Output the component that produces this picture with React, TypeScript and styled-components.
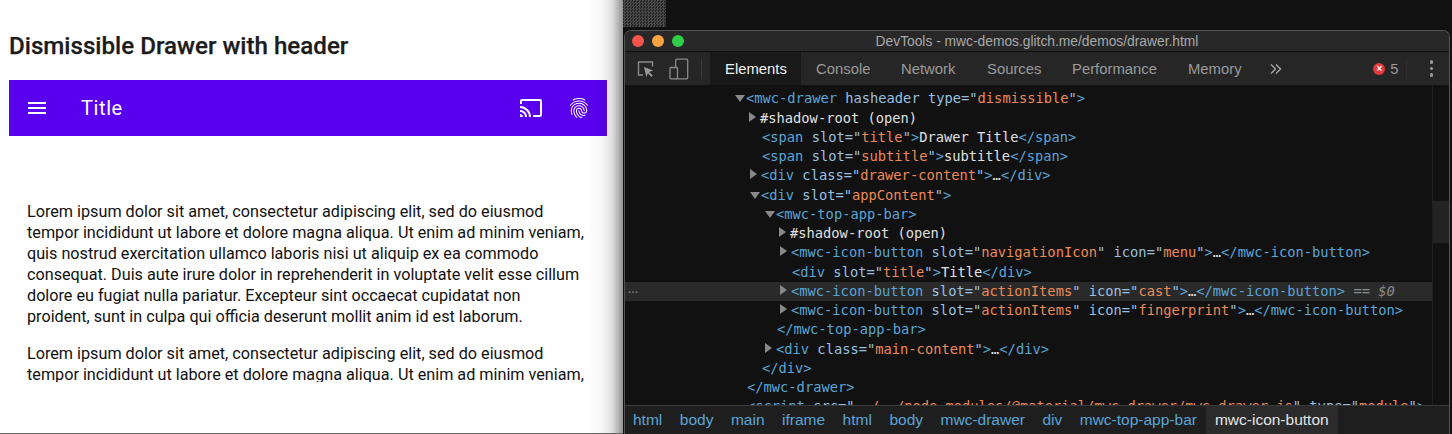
import React from 'react'
import styled, {createGlobalStyle} from 'styled-components'
import {MdCast, MdFingerprint, MdMenu} from 'react-icons/md'

const GlobalStyle = createGlobalStyle`
  html, body {
    margin: 0;
    padding: 0;
    width: 1452px;
    height: 434px;
    overflow: hidden;
    background: #111;
  }
`

const Page = styled.div`
  display: flex;
  width: 1452px;
  height: 434px;
  overflow: hidden;
`

// left side: the demo page
const DemoPane = styled.div`
  position: relative;
  flex: 0 0 623px;
  height: 434px;
  box-sizing: border-box;
  background: #fff;
  border-bottom: 1px solid #666;
  padding: 31px 16px 0 9px;
  font-family: Roboto, sans-serif;
  overflow: hidden;

  &::after {
    content: '';
    position: absolute;
    top: 0;
    right: 0;
    bottom: 0;
    width: 36px;
    background: linear-gradient(90deg, rgba(0, 0, 0, 0), rgba(0, 0, 0, 0.03) 40%, rgba(0, 0, 0, 0.13) 70%, rgba(0, 0, 0, 0.42));
  }
`

const DemoTitle = styled.h1`
  margin: 0;
  font-size: 24.15px;
  line-height: 30px;
  font-weight: 500;
  color: #1c1c1c;
  -webkit-text-stroke: 0.25px #1c1c1c;
`

const AppBar = styled.div`
  display: flex;
  align-items: center;
  height: 56px;
  margin-top: 19px;
  padding: 0 16px;
  background: #5900ee;
  color: #fff;
`

const BarTitle = styled.div`
  flex: 1;
  margin-left: 32px;
  font-size: 20px;
  font-weight: 400;
  letter-spacing: 0.6px;
`

const BarIcon = styled.span<{$gap?: number}>`
  display: flex;
  margin-left: ${(p) => p.$gap || 0}px;
  font-size: 24px;
`

const Article = styled.div`
  height: 181px;
  margin-top: 65px;
  padding: 0 21px 0 18px;
  overflow: hidden;
  font-size: 16.2px;
  line-height: 21px;
  color: #111;
`

const Para = styled.p`
  margin: 0 0 16px;
`

// right side: devtools
const DarkSide = styled.div`
  flex: 1;
  display: flex;
  flex-direction: column;
  min-width: 0;
  height: 434px;
  padding-right: 2px;
  background: #111;
`

const TopStrip = styled.div`
  flex: 0 0 30px;
`

const Noise = styled.div`
  width: 43px;
  height: 27px;
  background: repeating-conic-gradient(#4a4a4a 0 25%, #262626 0 50%) 0 0 / 3px 3px;
`

const Win = styled.div`
  flex: 1;
  display: flex;
  flex-direction: column;
  min-height: 0;
  margin-left: 1px;
  border: 1px solid #555;
  border-bottom: 0;
  border-radius: 7px 7px 0 0;
  background: #111;
  overflow: hidden;
  font-family: 'Liberation Sans', sans-serif;
`

const TitleBar = styled.div`
  position: relative;
  flex: 0 0 20px;
  display: flex;
  align-items: center;
  justify-content: center;
  background: #282828;
  border-bottom: 1px solid #111;
  font-size: 13.8px;
  color: #a8a8a8;
`

const Lights = styled.div`
  position: absolute;
  left: 7px;
  top: 4px;
  display: flex;
  gap: 8px;
`

const Light = styled.span<{$color: string}>`
  width: 12px;
  height: 12px;
  border-radius: 50%;
  background: ${(p) => p.$color};
`

const Toolbar = styled.div`
  flex: 0 0 33px;
  display: flex;
  align-items: center;
  background: #262626;
  color: #9a9a9a;
`

const ToolIcons = styled.div`
  display: flex;
  align-items: center;
  gap: 13px;
  width: 76px;
  padding-left: 11px;
  box-sizing: border-box;
`

const ToolDivider = styled.span`
  width: 1px;
  height: 20px;
  margin: 0 8px 0 0;
  background: #3a3a3a;
`

const Tab = styled.div<{$active?: boolean; $width: number}>`
  display: flex;
  align-items: center;
  height: 33px;
  width: ${(p) => p.$width}px;
  padding-left: 15px;
  box-sizing: border-box;
  font-size: 14.85px;
  background: ${(p) => (p.$active ? '#191919' : 'transparent')};
  color: ${(p) => (p.$active ? '#f0f0f0' : '#9a9a9a')};
`

const Chevrons = styled.div`
  display: flex;
  margin-left: -1px;
`

const Spacer = styled.div`
  flex: 1;
`

const ErrorDot = styled.span`
  display: flex;
  align-items: center;
  justify-content: center;
  width: 12px;
  height: 12px;
  border-radius: 50%;
  background: #e5383b;
  color: #fff;
  font-size: 10px;
  line-height: 12px;
  font-weight: 700;
`

const ErrorCount = styled.span`
  margin: 0 7px 0 5px;
  font-size: 14.7px;
  color: #9a9a9a;
`

const ToolDividerSmall = styled.span`
  width: 1px;
  height: 20px;
  margin-right: 23px;
  background: #2f2f2f;
`

const Kebab = styled.div`
  display: flex;
  flex-direction: column;
  gap: 3px;
  margin-right: 16px;

  span {
    width: 3.5px;
    height: 3.5px;
    border-radius: 50%;
    background: #999;
  }
`

const Body = styled.div`
  flex: 1;
  display: flex;
  min-height: 0;
`

const Tree = styled.div`
  flex: 1;
  min-width: 0;
  padding-top: 4.4px;
  overflow: hidden;
  font-family: 'DejaVu Sans Mono', monospace;
  font-size: 13.74px;
  line-height: 19.25px;
  color: #e0e0e0;
`

const Row = styled.div<{$indent: number; $selected?: boolean}>`
  position: relative;
  height: 19.25px;
  padding-left: ${(p) => p.$indent}px;
  white-space: pre;
  background: ${(p) => (p.$selected ? '#2a2a2a' : 'transparent')};
`

const Dots = styled.span`
  position: absolute;
  left: 3px;
  top: -2px;
  font-family: 'Liberation Sans', sans-serif;
  font-size: 11px;
  font-weight: 700;
  letter-spacing: 0.5px;
  color: #777;
`

const Arrow = styled.span<{$open?: boolean}>`
  display: inline-block;
  width: 0;
  height: 0;
  margin-left: -11px;
  margin-right: ${(p) => (p.$open ? 1 : 4)}px;
  vertical-align: 1px;
  ${(p) =>
    p.$open
      ? `border-left: 5px solid transparent; border-right: 5px solid transparent; border-top: 7px solid #888;`
      : `border-top: 5px solid transparent; border-bottom: 5px solid transparent; border-left: 7px solid #888;`}
`

const TagText = styled.span`
  color: #5aa5d6;
`

const AttrName = styled.span`
  color: #9ac0e0;
`

const AttrValue = styled.span`
  color: #ec8a58;
`

const Muted = styled.span`
  color: #8a8a8a;
`

const MutedItalic = styled.span`
  color: #8a8a8a;
  font-style: italic;
`

const Scrollbar = styled.div`
  flex: 0 0 16px;
  border-left: 1px solid #1f1f1f;
  padding-top: 116px;
`

const ScrollThumb = styled.div`
  height: 42px;
  background: #232323;
`

const Crumbs = styled.div`
  flex: 0 0 28px;
  display: flex;
  align-items: stretch;
  padding-left: 8px;
  background: #1e1e1e;
  border-top: 1px solid #3a3a3a;
  font-size: 15.5px;
`

const Crumb = styled.div`
  display: flex;
  align-items: center;
  margin-right: 17.5px;
  color: #5aa5d6;
`

const ActiveCrumb = styled.div`
  display: flex;
  align-items: center;
  margin-left: -8.5px;
  padding: 0 9px;
  background: #2b2b2b;
  color: #e4e4e4;
`

const Attr = ({n, v}: {n: string; v: string}) => (
  <>
    <AttrName> {n}="</AttrName>
    <AttrValue>{v}</AttrValue>
    <AttrName>"</AttrName>
  </>
)

const IconButtonRow = ({slot, icon, indent, selected}: {slot: string; icon: string; indent: number; selected?: boolean}) => (
  <Row $indent={indent} $selected={selected}>
    {selected && <Dots>...</Dots>}
    <Arrow />
    <TagText>&lt;mwc-icon-button</TagText>
    <Attr n="slot" v={slot} />
    <Attr n="icon" v={icon} />
    <TagText>&gt;</TagText>…<TagText>&lt;/mwc-icon-button&gt;</TagText>
    {selected && (
      <>
        <Muted> == </Muted>
        <MutedItalic>$0</MutedItalic>
      </>
    )}
  </Row>
)

const InspectIcon = () => (
  <svg width="20" height="20" viewBox="0 0 20 20" fill="none">
    <path d="M7 16H2.500V3h14v4.500" stroke="#8a8a8a" strokeWidth="1.4" />
    <path d="M8 8l9 3.400-3.800 1.500 3.600 3.600-1.400 1.400-3.500-3.600L10.300 18z" fill="#9a9a9a" />
  </svg>
)

const DeviceIcon = () => (
  <svg width="20" height="22" viewBox="0 0 20 22" fill="none">
    <rect x="6.700" y="1.200" width="12" height="19.600" rx="1" stroke="#8a8a8a" strokeWidth="1.3" />
    <rect x="1" y="9.500" width="7.500" height="11.300" rx="1" fill="#262626" stroke="#8a8a8a" strokeWidth="1.3" />
  </svg>
)

const lorem1 =
  'Lorem ipsum dolor sit amet, consectetur adipiscing elit, sed do eiusmod tempor incididunt ut labore et dolore magna aliqua. Ut enim ad minim veniam, quis nostrud exercitation ullamco laboris nisi ut aliquip ex ea commodo consequat. Duis aute irure dolor in reprehenderit in voluptate velit esse cillum dolore eu fugiat nulla pariatur. Excepteur sint occaecat cupidatat non proident, sunt in culpa qui officia deserunt mollit anim id est laborum.'

const tabs = [
  {name: 'Elements', width: 91, active: true},
  {name: 'Console', width: 85},
  {name: 'Network', width: 86},
  {name: 'Sources', width: 85},
  {name: 'Performance', width: 116},
  {name: 'Memory', width: 98},
]

const crumbs = ['html', 'body', 'main', 'iframe', 'html', 'body', 'mwc-drawer', 'div', 'mwc-top-app-bar']

const App = () => {
  return (
    <Page>
      <GlobalStyle />
      <DemoPane>
        <DemoTitle>Dismissible Drawer with header</DemoTitle>
        <AppBar>
          <BarIcon><MdMenu /></BarIcon>
          <BarTitle>Title</BarTitle>
          <BarIcon><MdCast /></BarIcon>
          <BarIcon $gap={24}><MdFingerprint /></BarIcon>
        </AppBar>
        <Article>
          <Para>{lorem1}</Para>
          <Para>{lorem1}</Para>
        </Article>
      </DemoPane>

      <DarkSide>
        <TopStrip><Noise /></TopStrip>
        <Win>
          <TitleBar>
            <Lights>
              <Light $color="#f4544c" />
              <Light $color="#fda33f" />
              <Light $color="#2ecf47" />
            </Lights>
            DevTools - mwc-demos.glitch.me/demos/drawer.html
          </TitleBar>
          <Toolbar>
            <ToolIcons>
              <InspectIcon />
              <DeviceIcon />
            </ToolIcons>
            <ToolDivider />
            {tabs.map((t) => (
              <Tab key={t.name} $active={t.active} $width={t.width}>{t.name}</Tab>
            ))}
            <Chevrons>
              <svg width="12" height="12" viewBox="0 0 12 12" fill="none" stroke="#a8a8a8" strokeWidth="1.4">
                <path d="M1 1.500l4.500 4.500L1 10.500M6 1.500l4.500 4.500L6 10.500" />
              </svg>
            </Chevrons>
            <Spacer />
            <ErrorDot>×</ErrorDot>
            <ErrorCount>5</ErrorCount>
            <ToolDividerSmall />
            <Kebab><span /><span /><span /></Kebab>
          </Toolbar>
          <Body>
            <Tree>
              <Row $indent={121}>
                <Arrow $open />
                <TagText>&lt;mwc-drawer</TagText>
                <AttrName> hasheader</AttrName>
                <Attr n="type" v="dismissible" />
                <TagText>&gt;</TagText>
              </Row>
              <Row $indent={135}><Arrow />#shadow-root (open)</Row>
              <Row $indent={137}>
                <TagText>&lt;span</TagText><Attr n="slot" v="title" /><TagText>&gt;</TagText>Drawer Title<TagText>&lt;/span&gt;</TagText>
              </Row>
              <Row $indent={137}>
                <TagText>&lt;span</TagText><Attr n="slot" v="subtitle" /><TagText>&gt;</TagText>subtitle<TagText>&lt;/span&gt;</TagText>
              </Row>
              <Row $indent={136}>
                <Arrow /><TagText>&lt;div</TagText><Attr n="class" v="drawer-content" /><TagText>&gt;</TagText>…<TagText>&lt;/div&gt;</TagText>
              </Row>
              <Row $indent={136}>
                <Arrow $open /><TagText>&lt;div</TagText><Attr n="slot" v="appContent" /><TagText>&gt;</TagText>
              </Row>
              <Row $indent={151}>
                <Arrow $open /><TagText>&lt;mwc-top-app-bar&gt;</TagText>
              </Row>
              <Row $indent={165}><Arrow />#shadow-root (open)</Row>
              <IconButtonRow indent={166} slot="navigationIcon" icon="menu" />
              <Row $indent={167}>
                <TagText>&lt;div</TagText><Attr n="slot" v="title" /><TagText>&gt;</TagText>Title<TagText>&lt;/div&gt;</TagText>
              </Row>
              <IconButtonRow indent={166} slot="actionItems" icon="cast" selected />
              <IconButtonRow indent={166} slot="actionItems" icon="fingerprint" />
              <Row $indent={152}><TagText>&lt;/mwc-top-app-bar&gt;</TagText></Row>
              <Row $indent={151}>
                <Arrow /><TagText>&lt;div</TagText><Attr n="class" v="main-content" /><TagText>&gt;</TagText>…<TagText>&lt;/div&gt;</TagText>
              </Row>
              <Row $indent={137}><TagText>&lt;/div&gt;</TagText></Row>
              <Row $indent={122}><TagText>&lt;/mwc-drawer&gt;</TagText></Row>
              <Row $indent={122}>
                <TagText>&lt;script</TagText>
                <Attr n="src" v="../../node_modules/@material/mwc-drawer/mwc-drawer.js" />
                <Attr n="type" v="module" />
                <TagText>&gt;</TagText>
              </Row>
            </Tree>
            <Scrollbar><ScrollThumb /></Scrollbar>
          </Body>
          <Crumbs>
            {crumbs.map((c, i) => (
              <Crumb key={i}>{c}</Crumb>
            ))}
            <ActiveCrumb>mwc-icon-button</ActiveCrumb>
          </Crumbs>
        </Win>
      </DarkSide>
    </Page>
  )
}

export default App
